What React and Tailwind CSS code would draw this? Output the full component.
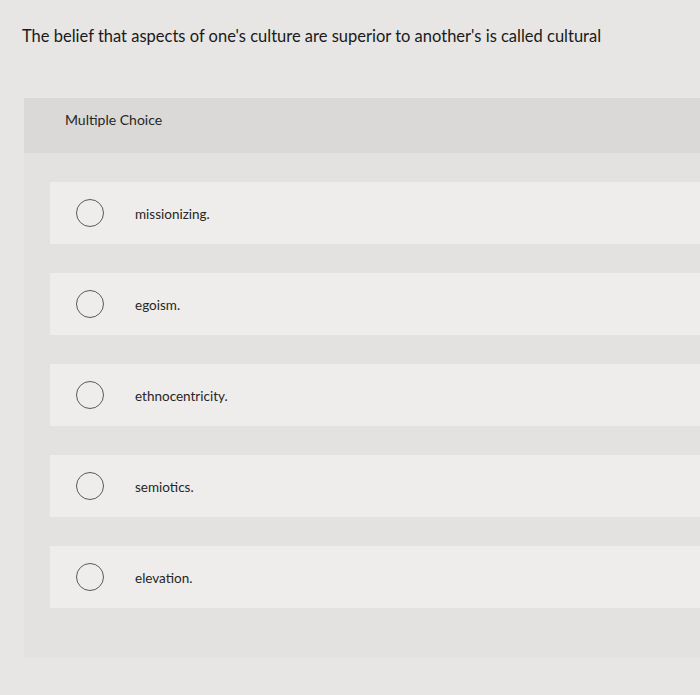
import React from "react";

const options = [
  "missionizing.",
  "egoism.",
  "ethnocentricity.",
  "semiotics.",
  "elevation.",
];

function Option({ label }) {
  return (
    <div className="flex h-[62px] items-center bg-[#eeedeb] pl-[26px]">
      <div className="h-[28px] w-[28px] rounded-full border-[1.5px] border-[#5a5a5a]" />
      <span className="ml-[31px] pt-[2px] text-[13.5px] text-[#262626]">{label}</span>
    </div>
  );
}

export default function App() {
  return (
    <div
      className="h-[695px] w-[700px] overflow-hidden bg-[#e7e6e4]"
      style={{ fontFamily: "Lato, 'Open Sans', sans-serif" }}
    >
      <div className="px-[22px] pt-[24px] text-[16.5px] text-[#1a1a1a]">
        The belief that aspects of one's culture are superior to another's is called cultural
      </div>

      <div className="ml-[24px] mt-[49px] h-[560px] bg-[#e3e2e0]">
        <div className="h-[55px] bg-[#dad9d7] pl-[41px] pt-[11px] text-[14px] text-[#262626]">
          Multiple Choice
        </div>
        <div className="flex flex-col gap-[29px] pl-[26px] pt-[29px]">
          {options.map((o) => (
            <Option key={o} label={o} />
          ))}
        </div>
      </div>
    </div>
  );
}
